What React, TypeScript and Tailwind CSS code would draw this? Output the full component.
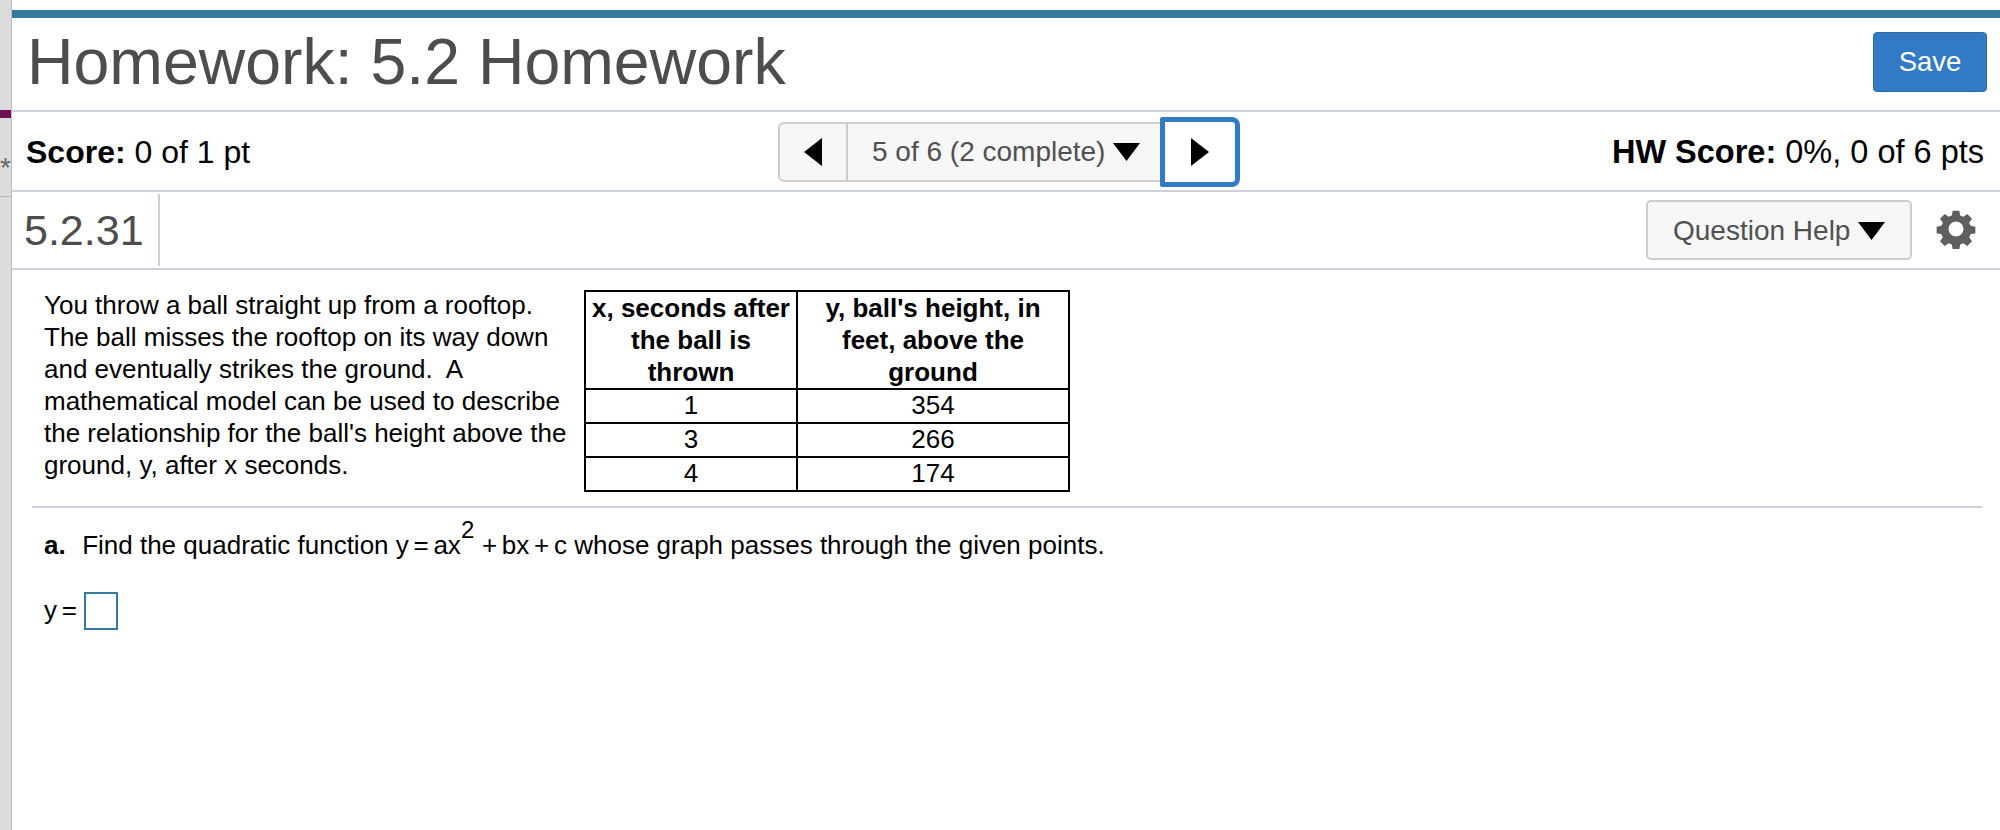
const Caret = ({ className }: { className: string }) => (
  <svg viewBox="0 0 10 10" className={className} fill="#000" preserveAspectRatio="none">
    <path d="M0 0H10L5 10Z" />
  </svg>
);

const Gear = () => (
  <svg viewBox="0 0 24 24" className="w-[40px] h-[40px] mb-[3px]" fill="#5f5f5f">
    <path
      fillRule="evenodd"
      d="M10 1h4l.5 2.900 1.900.8 2.400-1.700 2.800 2.800-1.700 2.400.8 1.900 2.900.5v4l-2.900.5-.8 1.900 1.700 2.400-2.800 2.800-2.400-1.700-1.900.8-.5 2.900h-4l-.5-2.900-1.900-.8-2.400 1.700-2.800-2.800 1.700-2.400-.8-1.900-2.900-.5v-4l2.900-.5.8-1.900-1.700-2.400 2.800-2.800 2.400 1.700 1.900-.8zM12 7.500a4.500 4.500 0 1 0 0 9a4.500 4.500 0 0 0 0-9z"
    />
  </svg>
);

const rows = [
  ["1", "354"],
  ["3", "266"],
  ["4", "174"],
];

export default function App() {
  return (
    <div className="flex h-[830px] w-[2000px] overflow-hidden bg-white font-['Liberation_Sans',Arial,sans-serif]">
      <div className="flex flex-col w-[12px] shrink-0 bg-[#dcdcdc] border-r border-[#bdbdbd]">
        <div className="mt-[110px] h-[8px] bg-[#6d1259]" />
        <div className="mt-[36px] h-[28px] text-[28px] leading-[28px] text-[#666]">*</div>
        <div className="mt-[14px] h-[1px] bg-[#bbb]" />
      </div>

      <div className="flex-1 min-w-0">
        <div className="mt-[10px] h-[8px] bg-[#337a9b]" />

        <div className="flex items-center justify-between h-[92px] pl-[15px] pr-[13px] pb-[4px]">
          <h1 className="text-[64.4px] leading-[72px] text-[#4d4d4d]">Homework: 5.2 Homework</h1>
          <button className="w-[114px] h-[60px] rounded-[4px] bg-[#337ac6] border border-[#2e6da4] text-white text-[27.5px]">
            Save
          </button>
        </div>

        <div className="relative flex items-center justify-between h-[82px] pl-[14px] pr-[16px] pt-[2px] border-y-2 border-[#cdd1de] text-[32.5px] text-black">
          <div className="text-[32px]">
            <b>Score:</b> 0 of 1 pt
          </div>
          <div className="absolute left-[766px] top-[5px] flex items-center">
            <div className="flex items-center h-[60px] rounded-l-[6px] border-2 border-[#cdcdcd] bg-[#f7f7f7]">
              <div className="flex items-center justify-center w-[68px] h-full border-r-2 border-[#cdcdcd]">
                <svg viewBox="0 0 10 10" className="w-[18px] h-[28px]" fill="#000" preserveAspectRatio="none">
                  <path d="M10 0V10L0 5Z" />
                </svg>
              </div>
              <div className="flex items-center gap-[8px] w-[312px] pl-[24px] text-[28px] text-[#505050]">
                5 of 6 (2 complete)
                <Caret className="w-[27px] h-[18px]" />
              </div>
            </div>
            <div className="flex items-center justify-center -ml-[2px] w-[80px] h-[70px] rounded-r-[8px] rounded-l-[2px] border-[5px] border-[#337ac6] bg-white">
              <svg viewBox="0 0 10 10" className="w-[18px] h-[28px]" fill="#000" preserveAspectRatio="none">
                <path d="M0 0V10L10 5Z" />
              </svg>
            </div>
          </div>
          <div>
            <b>HW Score:</b> 0%, 0 of 6 pts
          </div>
        </div>

        <div className="flex items-center justify-between h-[78px] border-b-2 border-[#cdd1de]">
          <div className="flex items-center h-[72px] w-[148px] pl-[12px] border-r-2 border-[#cdd1de] text-[43px] text-[#4d4d4d]">
            5.2.31
          </div>
          <div className="flex items-center gap-[24px] pr-[24px]">
            <div className="flex items-center gap-[8px] w-[266px] h-[60px] pl-[25px] pt-[1px] rounded-[5px] border-2 border-[#cdcdcd] bg-[#f7f7f7] text-[28px] text-[#505050]">
              Question Help
              <Caret className="w-[27px] h-[18px]" />
            </div>
            <Gear />
          </div>
        </div>

        <div className="pl-[20px] pr-[18px] text-black">
          <div className="flex pt-[20px] pb-[14px] border-b-2 border-[#cdd1de] pl-[12px]">
            <p className="w-[540px] -mt-[1px] text-[26px] leading-[32px]">
              You throw a ball straight up from a rooftop. The ball misses the rooftop on its way down and eventually
              strikes the ground.&nbsp; A mathematical model can be used to describe the relationship for the ball's
              height above the ground, y, after x seconds.
            </p>
            <table className="self-start border-collapse border-2 border-black text-[26px] leading-[32px] text-center">
              <thead>
                <tr>
                  <th className="w-[212px] border-2 border-black font-bold">x, seconds after the ball is thrown</th>
                  <th className="w-[272px] border-2 border-black font-bold px-[20px]">
                    y, ball's height, in feet, above the ground
                  </th>
                </tr>
              </thead>
              <tbody>
                {rows.map((r) => (
                  <tr key={r[0]} className="h-[34px]">
                    <td className="border-2 border-black pb-[2px] leading-[30px]">{r[0]}</td>
                    <td className="border-2 border-black pb-[2px] leading-[30px]">{r[1]}</td>
                  </tr>
                ))}
              </tbody>
            </table>
          </div>

          <div className="pl-[12px]">
            <div className="mt-[13px] h-[48px] text-[26px] leading-[48px] whitespace-pre">
              <b className="mr-[2px]">a.</b>
              {"  Find the quadratic function "}
              <span className="[word-spacing:-2.5px]">y = ax</span>
              <sup className="text-[24px] -top-[16px]">2</sup>
              <span className="ml-[3px] [word-spacing:-2.5px]">{" + bx + c"}</span>
              {" whose graph passes through the given points."}
            </div>
            <div className="flex items-center gap-[7px] mt-[22px] text-[26px] [word-spacing:-2.5px]">
              y =
              <div className="w-[34px] h-[38px] border-2 border-[#337a9b]" />
            </div>
          </div>
        </div>
      </div>
    </div>
  );
}
